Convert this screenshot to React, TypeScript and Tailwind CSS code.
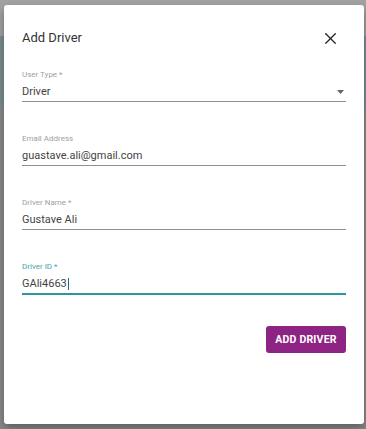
import { X } from 'lucide-react';

function Field({ label, value, required, focused, select }: { label: string; value: string; required?: boolean; focused?: boolean; select?: boolean }) {
  return (
    <div className="h-[64px] pt-[4px]">
      <div className={`text-[8px] leading-[10px] ${focused ? 'text-[#4aa3ac]' : 'text-[#a0a0a0]'}`}>
        {label}
        {required && ' *'}
      </div>
      <div
        className={`mt-[4px] flex items-center h-[18px] ${focused ? 'border-b-2 border-[#2a979f] h-[19px]' : 'border-b border-[#8f8f8f]'}`}
      >
        <span className="text-[11px] leading-[15px] text-[#444] pb-[2px] flex-1 flex items-center">
          {value}
          {focused && <span className="inline-block w-px h-[12px] bg-[#1f6f78] ml-px" />}
        </span>
        {select && (
          <svg width="7" height="4" viewBox="0 0 7 4" className="mr-[2px] mb-[2px]">
            <path d="M0 0h7L3.5 4z" fill="#666" />
          </svg>
        )}
      </div>
    </div>
  );
}

export default function App() {
  return (
    <div className="w-[366px] h-[429px] bg-[#8b8b8b] relative overflow-hidden" style={{ fontFamily: 'Roboto, "Noto Sans", sans-serif' }}>
      <div className="absolute left-0 top-0 w-full h-[36px] bg-[#a3a3a3]" />
      <div className="absolute left-0 top-[36px] w-full h-[72px] bg-[#7d8f90]" />
      <div className="absolute left-[4px] top-[5px] w-[360px] h-[419px] bg-white rounded-[3px] shadow-[0_4px_10px_rgba(0,0,0,0.35)] px-[18px]">
        <div className="flex items-center justify-between h-[28px] mt-[19px]">
          <span className="text-[13px] text-[#333]">Add Driver</span>
          <X className="w-[19px] h-[19px] text-[#222] mr-[6px]" strokeWidth={1.6} />
        </div>
        <div className="mt-[14px]">
          <Field label="User Type" value="Driver" required select />
          <Field label="Email Address" value="guastave.ali@gmail.com" />
          <Field label="Driver Name" value="Gustave Ali" required />
          <Field label="Driver ID" value="GAli4663" required focused />
        </div>
        <div className="flex justify-end mt-[4px]">
          <button className="w-[80px] h-[27px] bg-[#8d2383] text-white text-[10.5px] font-bold rounded-[3px] tracking-[0.2px]">
            ADD DRIVER
          </button>
        </div>
      </div>
    </div>
  );
}
